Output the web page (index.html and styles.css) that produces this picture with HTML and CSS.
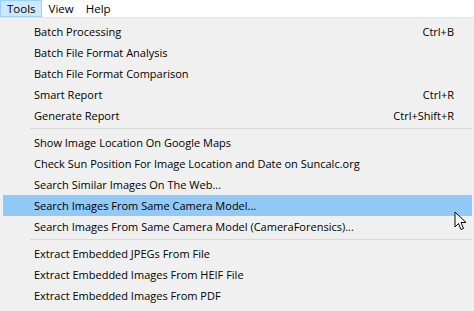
FILE: index.html
```html
<!DOCTYPE html>
<html lang="en">
    <head>
        <meta charset="UTF-8" />
        <title>Tools menu</title>
        <link rel="stylesheet" href="styles.css">
    </head>
    <body>

        <div class="menubar">
            <span class="menubar-item active">Tools</span>
            <span class="menubar-item">View</span>
            <span class="menubar-item">Help</span>
        </div>

        <div class="dropdown">
            <div class="menu-row"><span class="label">Batch Processing</span><span class="shortcut">Ctrl+B</span></div>
            <div class="menu-row"><span class="label">Batch File Format Analysis</span></div>
            <div class="menu-row"><span class="label">Batch File Format Comparison</span></div>
            <div class="menu-row"><span class="label">Smart Report</span><span class="shortcut">Ctrl+R</span></div>
            <div class="menu-row"><span class="label">Generate Report</span><span class="shortcut">Ctrl+Shift+R</span></div>

            <div class="separator"></div>

            <div class="menu-row"><span class="label">Show Image Location On Google Maps</span></div>
            <div class="menu-row"><span class="label">Check Sun Position For Image Location and Date on Suncalc.org</span></div>
            <div class="menu-row"><span class="label">Search Similar Images On The Web...</span></div>
            <div class="menu-row hover">
                <span class="label">Search Images From Same Camera Model...</span>
                <svg class="cursor" width="14" height="21" viewBox="0 0 14 21">
                    <path d="M1 1 L1 16 L4.5 12.5 L7 18.5 L9.5 17.5 L7 11.5 L12 11.5 Z" fill="#fff" stroke="#000" stroke-width="1" stroke-linejoin="miter"/>
                </svg>
            </div>
            <div class="menu-row"><span class="label">Search Images From Same Camera Model (CameraForensics)...</span></div>

            <div class="separator"></div>

            <div class="menu-row"><span class="label">Extract Embedded JPEGs From File</span></div>
            <div class="menu-row"><span class="label">Extract Embedded Images From HEIF File</span></div>
            <div class="menu-row"><span class="label">Extract Embedded Images From PDF</span></div>
        </div>

    </body>
</html>
```

FILE: styles.css
```css
body {
    margin: 0;
    font-family: 'Open Sans', 'Noto Sans', sans-serif;
    font-size: 11px;
    color: #000;
    background-color: #f0f0f0;
    height: 311px;
    overflow: hidden;
}

.menubar {
    display: flex;
    height: 17px;
    background-color: #fff;
    border-bottom: 1px solid #e3e3e3;
    font-size: 11.5px;
}

.menubar-item {
    display: flex;
    align-items: center;
    padding: 0 5px;
    box-sizing: border-box;
    border: 1px solid transparent;
}

.menubar-item.active {
    background-color: #cce8ff;
    border-color: #99d1ff;
    padding-left: 6px;
    margin-right: 1px;
}

.dropdown {
    padding: 3px 2px 0 2px;
    background-color: #f0f0f0;
}

.menu-row {
    position: relative;
    display: flex;
    align-items: center;
    height: 21px;
    padding: 0 18px 0 32px;
}

.menu-row .label {
    flex: 1;
    white-space: nowrap;
}

.menu-row .shortcut {
    white-space: nowrap;
}

.menu-row.hover {
    background-color: #91c9f7;
    margin-left: 1px;
    padding-left: 31px;
}

.separator {
    height: 1px;
    margin: 2px 0 3px 28px;
    background-color: #d7d7d7;
}

.cursor {
    position: absolute;
    left: 451px;
    top: 16px;
}
```
